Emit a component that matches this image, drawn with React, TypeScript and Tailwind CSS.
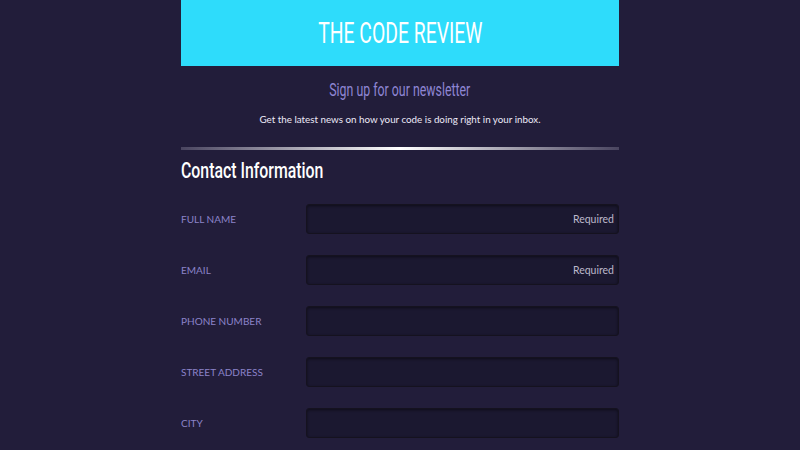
const condensed = { fontFamily: 'Roboto, "Liberation Sans", sans-serif' };

const fields = [
  { label: "Full Name", required: true },
  { label: "Email", required: true },
  { label: "Phone Number", required: false },
  { label: "Street Address", required: false },
  { label: "City", required: false },
];

export default function App() {
  return (
    <div className="min-h-[450px] w-full bg-[#221d3a] font-['Lato',sans-serif]">
      <div className="mx-auto w-[438px]">
        <header className="flex h-[66px] items-center justify-center bg-[#2edcfb]">
          <h1 className="inline-block scale-x-[0.645] text-[30px] leading-none text-white" style={condensed}>
            THE CODE REVIEW
          </h1>
        </header>

        <h2 className="mt-[12px] text-center text-[18px] leading-[24px] text-[#8f86d4]" style={condensed}>
          <span className="inline-block scale-x-[0.686]">Sign up for our newsletter</span>
        </h2>
        <p className="mt-[9px] text-center text-[9.8px] leading-[16px] text-[#ece9f7]">
          Get the latest news on how your code is doing right in your inbox.
        </p>

        <div className="mt-[20px] h-[3px] w-full bg-[linear-gradient(to_right,#4a4560,#ffffff_50%,#4a4560)]" />

        <h3 className="mt-[7px] text-[22px] leading-[28px] font-medium text-white" style={condensed}>
          <span className="inline-block origin-left scale-x-[0.72]">Contact Information</span>
        </h3>

        <div className="mt-[19px] flex flex-col gap-[21px]">
          {fields.map((f) => (
            <div key={f.label} className="flex items-center">
              <label className="w-[125px] text-[10px] uppercase text-[#8b83c9]">{f.label}</label>
              <div className="relative flex h-[30px] flex-1 items-center justify-end rounded-[3px] border border-[#15121f] bg-[#1b1830] pr-[4px] pt-[2px] shadow-[inset_0_1px_3px_rgba(0,0,0,0.5)]">
                {f.required && <span className="text-[10.5px] text-[#bdb8cc]">Required</span>}
              </div>
            </div>
          ))}
        </div>
      </div>
    </div>
  );
}
